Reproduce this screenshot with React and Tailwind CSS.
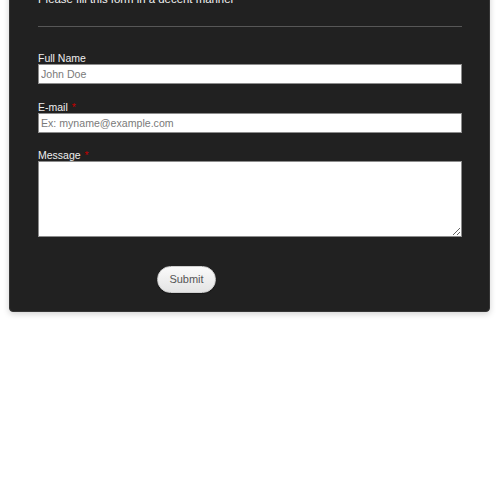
import React from 'react';

function Field({ label, required, children }) {
  return (
    <div className="flex flex-col">
      <label className="h-[11px] text-[10.5px] leading-[11px] text-[#eeeeee] whitespace-nowrap">
        {label}
        {required && <span className="ml-[4px] text-[#c00000]">*</span>}
      </label>
      {children}
    </div>
  );
}

export default function App() {
  return (
    <div
      className="min-h-screen bg-white px-[9px] pb-6"
      style={{ fontFamily: '"Liberation Sans", Arial, sans-serif' }}
    >
      <div className="-mt-[30px] w-[481px] rounded-b-[4px] border border-[#363636] bg-[#212121] pt-[21px] pb-[18px] pl-[28px] pr-[27px] shadow-[0_2px_6px_rgba(0,0,0,0.18)]">
        <p className="text-[11.4px] leading-[14px] text-[#f2f2f2]">
          Please fill this form in a decent manner
        </p>
        <div className="mt-[20px] h-px bg-[#575757]" />

        <form className="mt-[26px] flex flex-col" onSubmit={(e) => e.preventDefault()}>
          <Field label="Full Name">
            <input
              type="text"
              placeholder="John Doe"
              className="h-[20px] w-full border border-[#8c8c8c] bg-white pl-[2px] text-[10.6px] text-[#333] outline-none placeholder:text-[#7a7a7a]"
            />
          </Field>

          <div className="mt-[18px]">
            <Field label="E-mail" required>
              <input
                type="email"
                placeholder="Ex: myname@example.com"
                className="h-[20px] w-full border border-[#8c8c8c] bg-white pl-[2px] text-[10.6px] text-[#333] outline-none placeholder:text-[#7a7a7a]"
              />
            </Field>
          </div>

          <div className="mt-[17px]">
            <Field label="Message" required>
              <textarea className="block h-[76px] w-full border border-[#8c8c8c] bg-white p-[2px] text-[10.6px] text-[#333] outline-none" />
            </Field>
          </div>

          <div className="mt-[29px] pl-[119px]">
            <button
              type="submit"
              className="h-[27px] w-[59px] rounded-full border border-[#cfcfcf] bg-gradient-to-b from-[#fafafa] to-[#e4e4e4] text-[11px] text-[#555] shadow-[0_1px_1px_rgba(0,0,0,0.3)]"
            >
              Submit
            </button>
          </div>
        </form>
      </div>
    </div>
  );
}
